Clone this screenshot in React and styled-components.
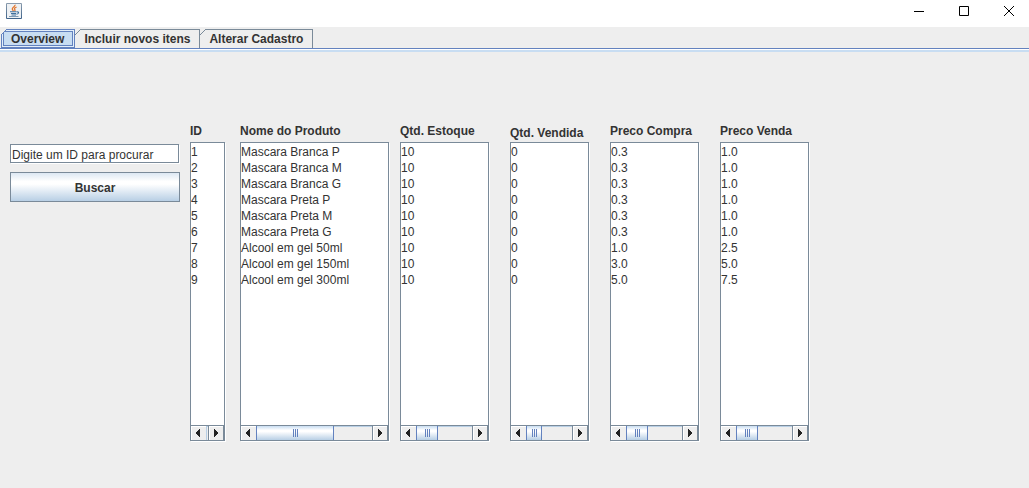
import React, { useState } from 'react';
import styled, { createGlobalStyle } from 'styled-components';

const tabs = ['Overview', 'Incluir novos itens', 'Alterar Cadastro'];

const columns = [
  { id: 'id', title: 'ID', width: 36, thumb: 0, values: ['1', '2', '3', '4', '5', '6', '7', '8', '9'] },
  {
    id: 'nome',
    title: 'Nome do Produto',
    width: 150,
    thumb: 78,
    values: [
      'Mascara Branca P',
      'Mascara Branca M',
      'Mascara Branca G',
      'Mascara Preta P',
      'Mascara Preta M',
      'Mascara Preta G',
      'Alcool em gel 50ml',
      'Alcool em gel 150ml',
      'Alcool em gel 300ml'
    ]
  },
  { id: 'estoque', title: 'Qtd. Estoque', width: 90, thumb: 22, values: Array(9).fill('10') },
  { id: 'vendida', title: 'Qtd. Vendida', width: 80, thumb: 16, low: true, values: Array(9).fill('0') },
  {
    id: 'compra',
    title: 'Preco Compra',
    width: 90,
    thumb: 22,
    values: ['0.3', '0.3', '0.3', '0.3', '0.3', '0.3', '1.0', '3.0', '5.0']
  },
  {
    id: 'venda',
    title: 'Preco Venda',
    width: 90,
    thumb: 22,
    values: ['1.0', '1.0', '1.0', '1.0', '1.0', '1.0', '2.5', '5.0', '7.5']
  }
];

const JavaIcon = () => (
  <svg width="16" height="16" viewBox="0 0 16 16" aria-hidden="true">
    <defs>
      <linearGradient id="tile" x1="0" y1="0" x2="0" y2="1">
        <stop offset="0" stopColor="#8c9dae" />
        <stop offset="1" stopColor="#3f638a" />
      </linearGradient>
    </defs>
    <rect width="16" height="16" rx="1" fill="url(#tile)" />
    <rect x="1" y="1" width="14" height="14" fill="#eef1f4" />
    <path d="M9 1.800C9.600 3.800 5.800 4.300 6.300 6.200c.2.7.9 1 .9 2M10.600 4C8.600 4.800 8 5.600 8.800 6.500c.4.5.2 1.100-.2 1.600" fill="none" stroke="#e3752b" strokeWidth="1.300" />
    <path d="M4 8.800h6.500M5 10.500h5M5.500 12h4.500M10.800 9c2.500-.6 2.300 1.800-.4 2.300" fill="none" stroke="#41709c" strokeWidth="1.100" />
    <path d="M3 13.500h9.500" stroke="#7f9ab3" />
  </svg>
);

const Arrow = ({ right }) => (
  <svg width="4" height="8" viewBox="0 0 4 8" aria-hidden="true">
    <path
      d={right ? 'M1 0H0v8h1V7h1V6h1V5h1V3H3V2H2V1H1z' : 'M3 0h1v8H3V7H2V6H1V5H0V3h1V2h1V1h1z'}
      fill="#222"
    />
  </svg>
);

const ScrollBar = ({ title, thumb }) => (
  <Bar>
    <ArrowButton type="button" aria-label={`${title}: rolar para a esquerda`}>
      <Arrow />
    </ArrowButton>
    <Track>
      {thumb > 0 && (
        <Thumb $size={thumb}>
          <Grip />
          <Grip />
          <Grip />
        </Thumb>
      )}
    </Track>
    <ArrowButton type="button" $end aria-label={`${title}: rolar para a direita`}>
      <Arrow right />
    </ArrowButton>
  </Bar>
);

const App = () => {
  const [active, setActive] = useState(tabs[0]);
  const [query, setQuery] = useState('Digite um ID para procurar');

  return (
    <Window>
      <GlobalStyle />
      <TitleBar>
        <JavaIcon />
        <WindowButtons>
          <WindowButton type="button" aria-label="Minimizar">
            <svg width="10" height="10" viewBox="0 0 10 10"><path d="M0 5.500h10" stroke="#000" /></svg>
          </WindowButton>
          <WindowButton type="button" aria-label="Maximizar">
            <svg width="10" height="10" viewBox="0 0 10 10"><path d="M.5.5h9v9h-9z" fill="none" stroke="#000" /></svg>
          </WindowButton>
          <WindowButton type="button" aria-label="Fechar">
            <svg width="10" height="10" viewBox="0 0 10 10"><path d="M0 0l10 10M10 0L0 10" stroke="#000" /></svg>
          </WindowButton>
        </WindowButtons>
      </TitleBar>

      <TabStrip role="tablist">
        {tabs.map(tab => (
          <Tab key={tab} type="button" role="tab" aria-selected={active === tab} onClick={() => setActive(tab)}>
            <Corner width="6" height="6" viewBox="0 0 6 6" aria-hidden="true">
              <path d="M0 0h6L0 6z" fill="#eee" />
              <path d="M0 6L6 0" stroke={active === tab ? '#6382bf' : '#7a8a99'} />
            </Corner>
            {tab}
          </Tab>
        ))}
      </TabStrip>

      <Panel>
        <Form onSubmit={e => e.preventDefault()}>
          <SearchInput aria-label="ID" value={query} onChange={e => setQuery(e.target.value)} />
          <SearchButton type="submit">Buscar</SearchButton>
        </Form>
        {columns.map(({ id, title, width, thumb, low, values }) => (
          <Column key={id} $width={width}>
            <Title id={id} $low={low}>{title}</Title>
            <ListBox>
              <List aria-labelledby={id}>
                {values.map((value, i) => <Item key={i}>{value}</Item>)}
              </List>
              <ScrollBar title={title} thumb={thumb} />
            </ListBox>
          </Column>
        ))}
      </Panel>
    </Window>
  );
};

export default App;

const GlobalStyle = createGlobalStyle`
  * {
    box-sizing: border-box;
  }

  body {
    margin: 0;
    background: #EEE;
  }

  body, button, input {
    font-family: "Liberation Sans", Arial, sans-serif;
    font-size: 12px;
    color: #333;
  }
`;

const Window = styled.div`
  display: flex;
  flex-direction: column;
  min-height: 100vh;
`;

const TitleBar = styled.header`
  display: flex;
  align-items: center;
  justify-content: space-between;
  height: 27px;
  padding: 0 0 5px 6px;
  background: #FFF;
`;

const WindowButtons = styled.div`
  display: flex;
`;

const WindowButton = styled.button`
  display: flex;
  align-items: center;
  justify-content: center;
  width: 45px;
  height: 22px;
  padding: 0 0 0 4px;
  border: 0;
  background: transparent;
`;

const TabStrip = styled.div`
  display: flex;
  padding: 2px 0 2px 1px;
  border-bottom: 2px solid #C8DDF2;
  box-shadow: inset 0 -1px #FFF, inset 0 -2px #6382BF;
`;

const Tab = styled.button`
  position: relative;
  height: 19px;
  padding: 0 9px;
  border: solid #7A8A99;
  border-width: 1px 1px 0 0;
  background: transparent;
  font-weight: bold;
  line-height: 18px;

  &[aria-selected='true'] {
    padding: 1px 10px 0 9px;
    border: 1px solid #6382BF;
    background: #C8DDF2;
    box-shadow: inset 0 0 0 1px #E3EEF9, inset 0 0 0 2px #6382BF;
    line-height: 16px;
  }

  &[aria-selected='true'] > svg {
    left: -1px;
  }
`;

const Corner = styled.svg`
  position: absolute;
  top: -1px;
  left: 0;
`;

const Panel = styled.main`
  display: grid;
  flex: 1;
  grid-template-columns: 170px 40px 150px 100px 90px 100px 90px;
  gap: 10px;
  padding: 72px 10px 47px;
`;

const Form = styled.form`
  padding-top: 20px;
`;

const SearchInput = styled.input`
  display: block;
  width: calc(100% - 1px);
  height: 19px;
  padding: 2px 1px 0;
  border: 1px solid #7A8A99;
  background: #FFF;
  box-shadow: 1px 1px #FFF;
  outline: none;
`;

const SearchButton = styled.button`
  width: 100%;
  height: 30px;
  margin-top: 9px;
  padding: 2px 0 0;
  border: 1px solid #7A8A99;
  background: linear-gradient(#DDE8F3, #FFF 30%, #FFF 40%, #B8CFE5);
  font-weight: bold;
`;

const Column = styled.section`
  display: flex;
  flex-direction: column;
  width: ${({ $width }) => $width}px;
`;

const Title = styled.h2`
  height: 18px;
  margin: 0;
  padding-top: ${({ $low }) => ($low ? 2 : 0)}px;
  font-size: 12px;
  line-height: 14px;
  white-space: nowrap;
`;

const ListBox = styled.div`
  display: flex;
  flex: 1;
  flex-direction: column;
  margin-right: 1px;
  border: 1px solid #7A8A99;
  background: #FFF;
  box-shadow: 1px 1px #FFF;
`;

const List = styled.ul`
  flex: 1;
  margin: 0;
  padding: 1px 0 0;
  list-style: none;
`;

const Item = styled.li`
  line-height: 16px;
  white-space: nowrap;
`;

const Bar = styled.div`
  display: flex;
  height: 15px;
  border-top: 1px solid #7A8A99;
  background: #EEE;
`;

const ArrowButton = styled.button`
  display: flex;
  flex: none;
  align-items: center;
  justify-content: center;
  width: ${({ $end }) => ($end ? 16 : 15)}px;
  padding: ${({ $end }) => ($end ? '0' : '0 1px 0 0')};
  border: solid #7A8A99;
  border-width: ${({ $end }) => ($end ? '0 1px 0 1px' : '0')};
  background: #EEE;
  box-shadow: inset 1px 1px #FFF;
`;

const Track = styled.div`
  flex: 1;
  min-width: 0;
  box-shadow: inset 1px 1px #B8CFE5;
`;

const Thumb = styled.div`
  display: flex;
  align-items: center;
  justify-content: center;
  gap: 1px;
  width: ${({ $size }) => $size}px;
  height: 100%;
  border: solid #6382BF;
  border-width: 0 1px;
  background: linear-gradient(#C8DDF2, #FFF 30%, #FFF 40%, #B8CFE5);
`;

const Grip = styled.span`
  width: 1px;
  height: 8px;
  background: #6382BF;
`;
